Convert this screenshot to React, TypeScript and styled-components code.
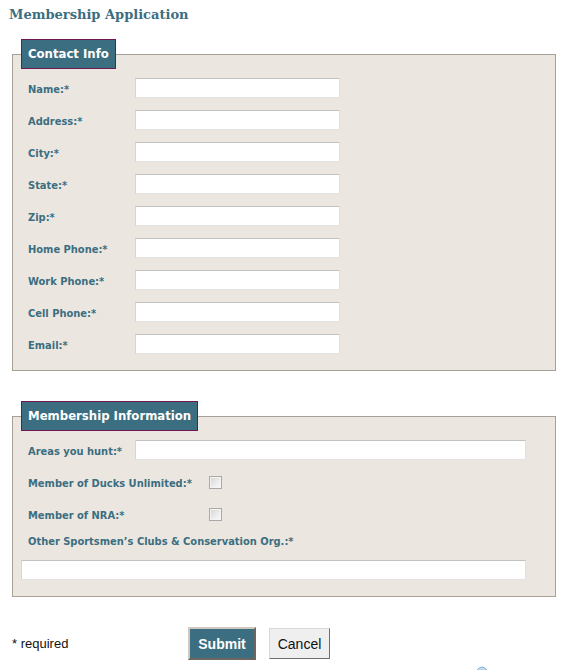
import React from "react";
import styled, { createGlobalStyle } from "styled-components";

const teal = "#3b6e80";

const GlobalStyle = createGlobalStyle`
  body {
    margin: 0;
    background: #ffffff;
    font-family: "DejaVu Sans Condensed", "DejaVu Sans", sans-serif;
  }
`;

const Page = styled.div`
  width: 544px;
  padding: 0 12px;
`;

const Title = styled.h1`
  margin: 0 0 0 -3px;
  height: 39px;
  padding-top: 5px;
  box-sizing: border-box;
  font-family: "DejaVu Serif", Georgia, serif;
  font-size: 13px;
  line-height: 20px;
  font-weight: bold;
  color: ${teal};
`;

const Fieldset = styled.fieldset<{ $gap?: number }>`
  margin: ${(p) => p.$gap ?? 0}px 0 0;
  padding: 0 8px 16px;
  min-width: 0;
  border: 1px solid #a8a097;
  background: #ebe7e0;
`;

const Legend = styled.legend`
  padding: 5px 6px 6px;
  border: 1px solid #6e1750;
  background: ${teal};
  color: #ffffff;
  font-family: "DejaVu Sans Condensed", "DejaVu Sans", sans-serif;
  font-weight: bold;
  font-size: 13px;
  line-height: 17px;
`;

const Rows = styled.div`
  display: grid;
  grid-template-columns: 107px auto;
  grid-auto-rows: 20px;
  row-gap: 12px;
  align-items: center;
  padding: 9px 7px 0;
`;

const Label = styled.label`
  display: block;
  padding-top: 3px;
  font-weight: bold;
  font-size: 11px;
  line-height: 20px;
  color: ${teal};
  white-space: nowrap;
`;

const TextInput = styled.input<{ $w: number }>`
  box-sizing: border-box;
  width: ${(p) => p.$w}px;
  height: 20px;
  margin: 0;
  padding: 1px 4px;
  border: 1px solid #e2e2e2;
  border-top-color: #c2c2c2;
  border-left-color: #d6d6d6;
  background: #ffffff;
  font: 12px "Liberation Sans", Arial, sans-serif;
  outline: none;
`;

const Check = styled.input`
  appearance: none;
  box-sizing: border-box;
  width: 13px;
  height: 13px;
  margin: 0 0 0 1px;
  border: 1px solid #a9a9a9;
  background: linear-gradient(135deg, #d4d4d4 0%, #eeeeee 60%, #fafafa 100%);
  box-shadow: inset 0 0 0 1px #f4f4f4;
`;

const CheckRow = styled.div`
  grid-column: 1 / -1;
  display: flex;
  align-items: center;
`;

const CheckLabelCell = styled.div`
  width: 180px;
`;

const WideBlock = styled.div`
  padding-top: 5px;
`;

const WideLabel = styled(Label)`
  padding-left: 7px;
`;

const WideInput = styled(TextInput)`
  display: block;
  margin-top: 8px;
`;

const Footer = styled.div`
  display: flex;
  align-items: center;
  margin-top: 30px;
  font-family: "Liberation Sans", Arial, sans-serif;
`;

const Required = styled.span`
  width: 176px;
  font-size: 13px;
  color: #111111;
`;

const Button = styled.button<{ $primary?: boolean }>`
  box-sizing: border-box;
  margin: 0 13px 0 0;
  font-family: "Liberation Sans", Arial, sans-serif;
  font-size: 14px;
  cursor: pointer;
  ${(p) =>
    p.$primary
      ? `
    width: 68px;
    height: 33px;
    background: ${teal};
    color: #ffffff;
    font-weight: bold;
    border: 2px solid;
    border-color: #cfc8c0 #6d6660 #6d6660 #cfc8c0;
  `
      : `
    width: 61px;
    height: 31px;
    background: #efefef;
    color: #111111;
    border: 1px solid;
    border-color: #d8d8d8 #707070 #707070 #d8d8d8;
  `}
`;

const Corner = styled.div`
  padding: 3px 0 0 462px;
  line-height: 0;
`;

const contactFields = [
  "Name:*",
  "Address:*",
  "City:*",
  "State:*",
  "Zip:*",
  "Home Phone:*",
  "Work Phone:*",
  "Cell Phone:*",
  "Email:*",
];

export default function App() {
  return (
    <>
      <GlobalStyle />
      <Page>
        <Title>Membership Application</Title>

        <Fieldset>
          <Legend>Contact Info</Legend>
          <Rows>
            {contactFields.map((f) => (
              <React.Fragment key={f}>
                <Label>{f}</Label>
                <TextInput type="text" $w={205} />
              </React.Fragment>
            ))}
          </Rows>
        </Fieldset>

        <Fieldset $gap={30}>
          <Legend>Membership Information</Legend>
          <Rows>
            <Label>Areas you hunt:*</Label>
            <TextInput type="text" $w={391} />
            <CheckRow>
              <CheckLabelCell>
                <Label>Member of Ducks Unlimited:*</Label>
              </CheckLabelCell>
              <Check type="checkbox" />
            </CheckRow>
            <CheckRow>
              <CheckLabelCell>
                <Label>Member of NRA:*</Label>
              </CheckLabelCell>
              <Check type="checkbox" />
            </CheckRow>
          </Rows>
          <WideBlock>
            <WideLabel>Other Sportsmen’s Clubs &amp; Conservation Org.:*</WideLabel>
            <WideInput type="text" $w={505} />
          </WideBlock>
        </Fieldset>

        <Footer>
          <Required>* required</Required>
          <Button $primary>Submit</Button>
          <Button>Cancel</Button>
        </Footer>

        <Corner>
          <svg width="16" height="8" viewBox="0 0 16 8">
            <path d="M2 8 Q8 0 14 8 Z" fill="#bcd8f0" stroke="#8fb4d8" strokeWidth="1" />
          </svg>
        </Corner>
      </Page>
    </>
  );
}
